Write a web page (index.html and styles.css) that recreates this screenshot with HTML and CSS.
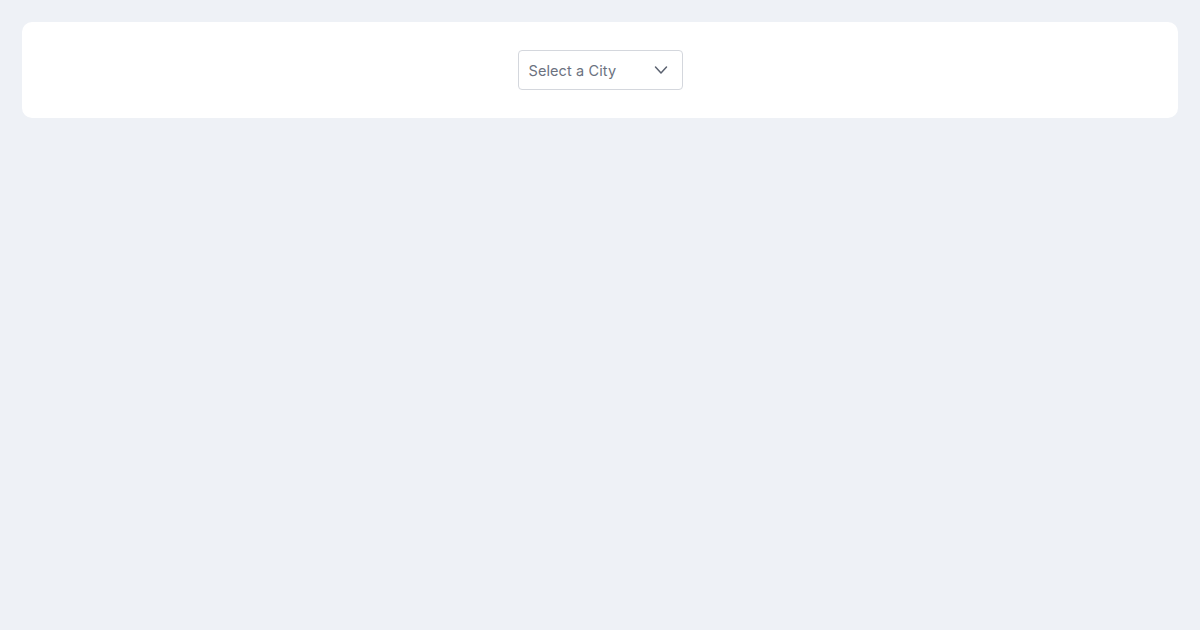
FILE: index.html
```html
<!DOCTYPE html>
<html>
<head>
<meta charset="utf-8">
<link rel="stylesheet" href="styles.css">
</head>
<body>
<div class="page">
  <div class="card">
    <div class="select">
      <span class="select-label">Select a City</span>
      <svg class="chevron" width="14" height="14" viewBox="0 0 14 14"><path d="M1.5 4 L7 10 L12.5 4" fill="none" stroke="#5b6270" stroke-width="1.5" stroke-linecap="round" stroke-linejoin="round"/></svg>
    </div>
  </div>
</div>
</body>
</html>
```
FILE: styles.css
```css
html, body {
  margin: 0;
  padding: 0;
  background: #eef1f6;
  font-family: "Inter", "Noto Sans", sans-serif;
}
.page {
  padding: 22px;
  min-height: 630px;
  box-sizing: border-box;
}
.card {
  background: #ffffff;
  border-radius: 10px;
  padding: 28px 0;
  display: flex;
  justify-content: center;
}
.select {
  width: 165px;
  height: 40px;
  box-sizing: border-box;
  border: 1px solid #d4d7dd;
  border-radius: 4px;
  display: flex;
  align-items: center;
  justify-content: space-between;
  padding: 0 14px 0 10px;
}
.select-label {
  font-size: 14.5px;
  color: #6b7280;
  letter-spacing: 0.1px;
}
.chevron {
  display: block;
}
```
